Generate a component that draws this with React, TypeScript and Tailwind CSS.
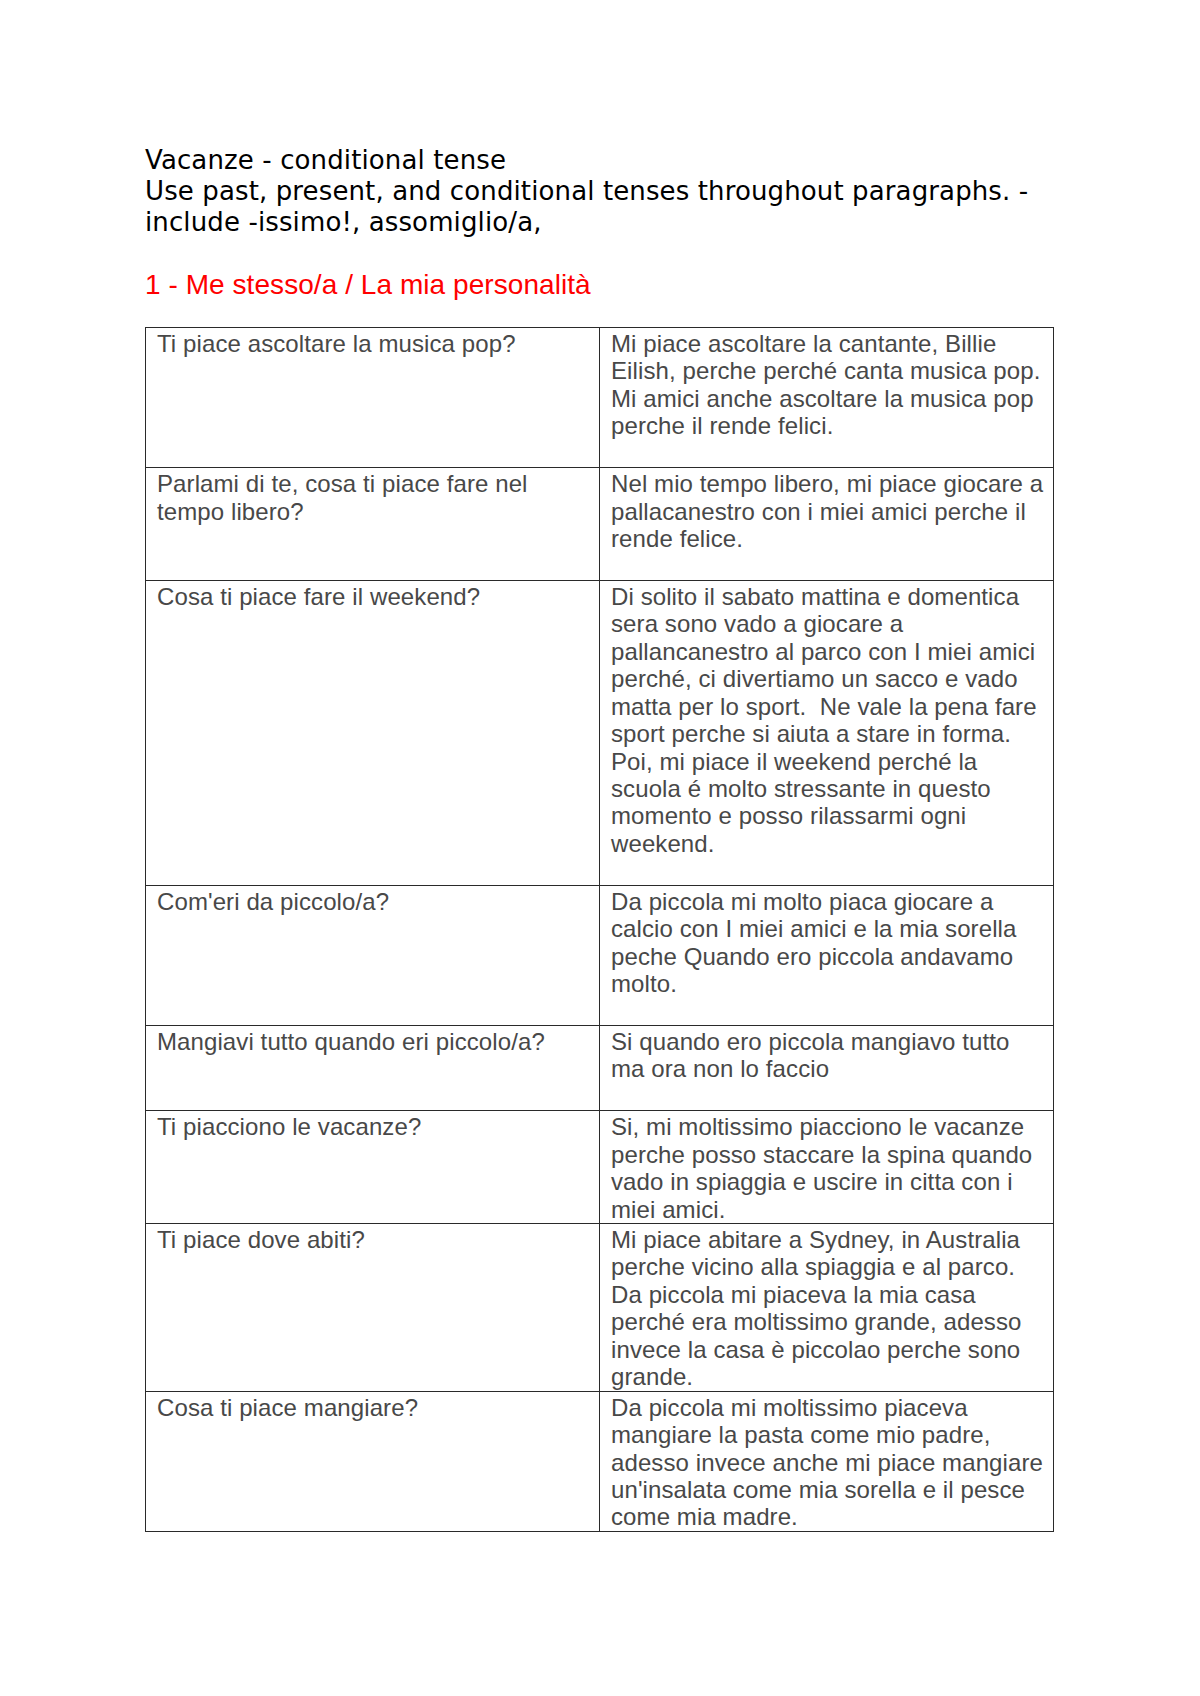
const rows: { q: string[]; a: string[] }[] = [
  {
    q: ["Ti piace ascoltare la musica pop?"],
    a: [
      "Mi piace ascoltare la cantante, Billie",
      "Eilish, perche perché canta musica pop.",
      "Mi amici anche ascoltare la musica pop",
      "perche il rende felici.",
      "",
    ],
  },
  {
    q: ["Parlami di te, cosa ti piace fare nel", "tempo libero?"],
    a: [
      "Nel mio tempo libero, mi piace giocare a",
      "pallacanestro con i miei amici perche il",
      "rende felice.",
      "",
    ],
  },
  {
    q: ["Cosa ti piace fare il weekend?"],
    a: [
      "Di solito il sabato mattina e domentica",
      "sera sono vado a giocare a",
      "pallancanestro al parco con I miei amici",
      "perché, ci divertiamo un sacco e vado",
      "matta per lo sport.  Ne vale la pena fare",
      "sport perche si aiuta a stare in forma.",
      "Poi, mi piace il weekend perché la",
      "scuola é molto stressante in questo",
      "momento e posso rilassarmi ogni",
      "weekend.",
      "",
    ],
  },
  {
    q: ["Com'eri da piccolo/a?"],
    a: [
      "Da piccola mi molto piaca giocare a",
      "calcio con I miei amici e la mia sorella",
      "peche Quando ero piccola andavamo",
      "molto.",
      "",
    ],
  },
  {
    q: ["Mangiavi tutto quando eri piccolo/a?"],
    a: ["Si quando ero piccola mangiavo tutto", "ma ora non lo faccio", ""],
  },
  {
    q: ["Ti piacciono le vacanze?"],
    a: [
      "Si, mi moltissimo piacciono le vacanze",
      "perche posso staccare la spina quando",
      "vado in spiaggia e uscire in citta con i",
      "miei amici.",
    ],
  },
  {
    q: ["Ti piace dove abiti?"],
    a: [
      "Mi piace abitare a Sydney, in Australia",
      "perche vicino alla spiaggia e al parco.",
      "Da piccola mi piaceva la mia casa",
      "perché era moltissimo grande, adesso",
      "invece la casa è piccolao perche sono",
      "grande.",
    ],
  },
  {
    q: ["Cosa ti piace mangiare?"],
    a: [
      "Da piccola mi moltissimo piaceva",
      "mangiare la pasta come mio padre,",
      "adesso invece anche mi piace mangiare",
      "un'insalata come mia sorella e il pesce",
      "come mia madre.",
    ],
  },
];

function Cell({ lines }: { lines: string[] }) {
  return (
    <div className="border-r border-b border-[#2a2a2a] pt-[2px] px-[11px]">
      {lines.map((l, i) => (
        <div key={i} className="whitespace-pre h-[27.45px]">
          {l}
        </div>
      ))}
    </div>
  );
}

export default function App() {
  return (
    <div className="w-[1200px] min-h-[1696px] bg-white pl-[145px] pt-[145px]">
      <div className="font-['DejaVu_Sans',sans-serif] text-[26px] tracking-[0.12px] leading-[31px] text-black">
        <div>Vacanze - conditional tense</div>
        <div className="whitespace-nowrap">
          Use past, present, and conditional tenses throughout paragraphs. -
        </div>
        <div>include -issimo!, assomiglio/a,</div>
        <div className="h-[31px]"></div>
      </div>
      <div className="font-['Liberation_Sans',Arial,sans-serif] text-[28px] tracking-[0.06px] leading-[32px] text-[#ff0000]">
        1 - Me stesso/a / La mia personalità
      </div>

      <div className="mt-[26px] w-[909px] grid grid-cols-[454px_454px] border-l border-t border-[#2a2a2a] font-['Liberation_Sans',Arial,sans-serif] text-[24px] tracking-[0.1px] leading-[27.45px] text-[#484848]">
        {rows.map((r, i) => (
          <div key={i} className="contents">
            <Cell lines={r.q} />
            <Cell lines={r.a} />
          </div>
        ))}
      </div>
    </div>
  );
}
